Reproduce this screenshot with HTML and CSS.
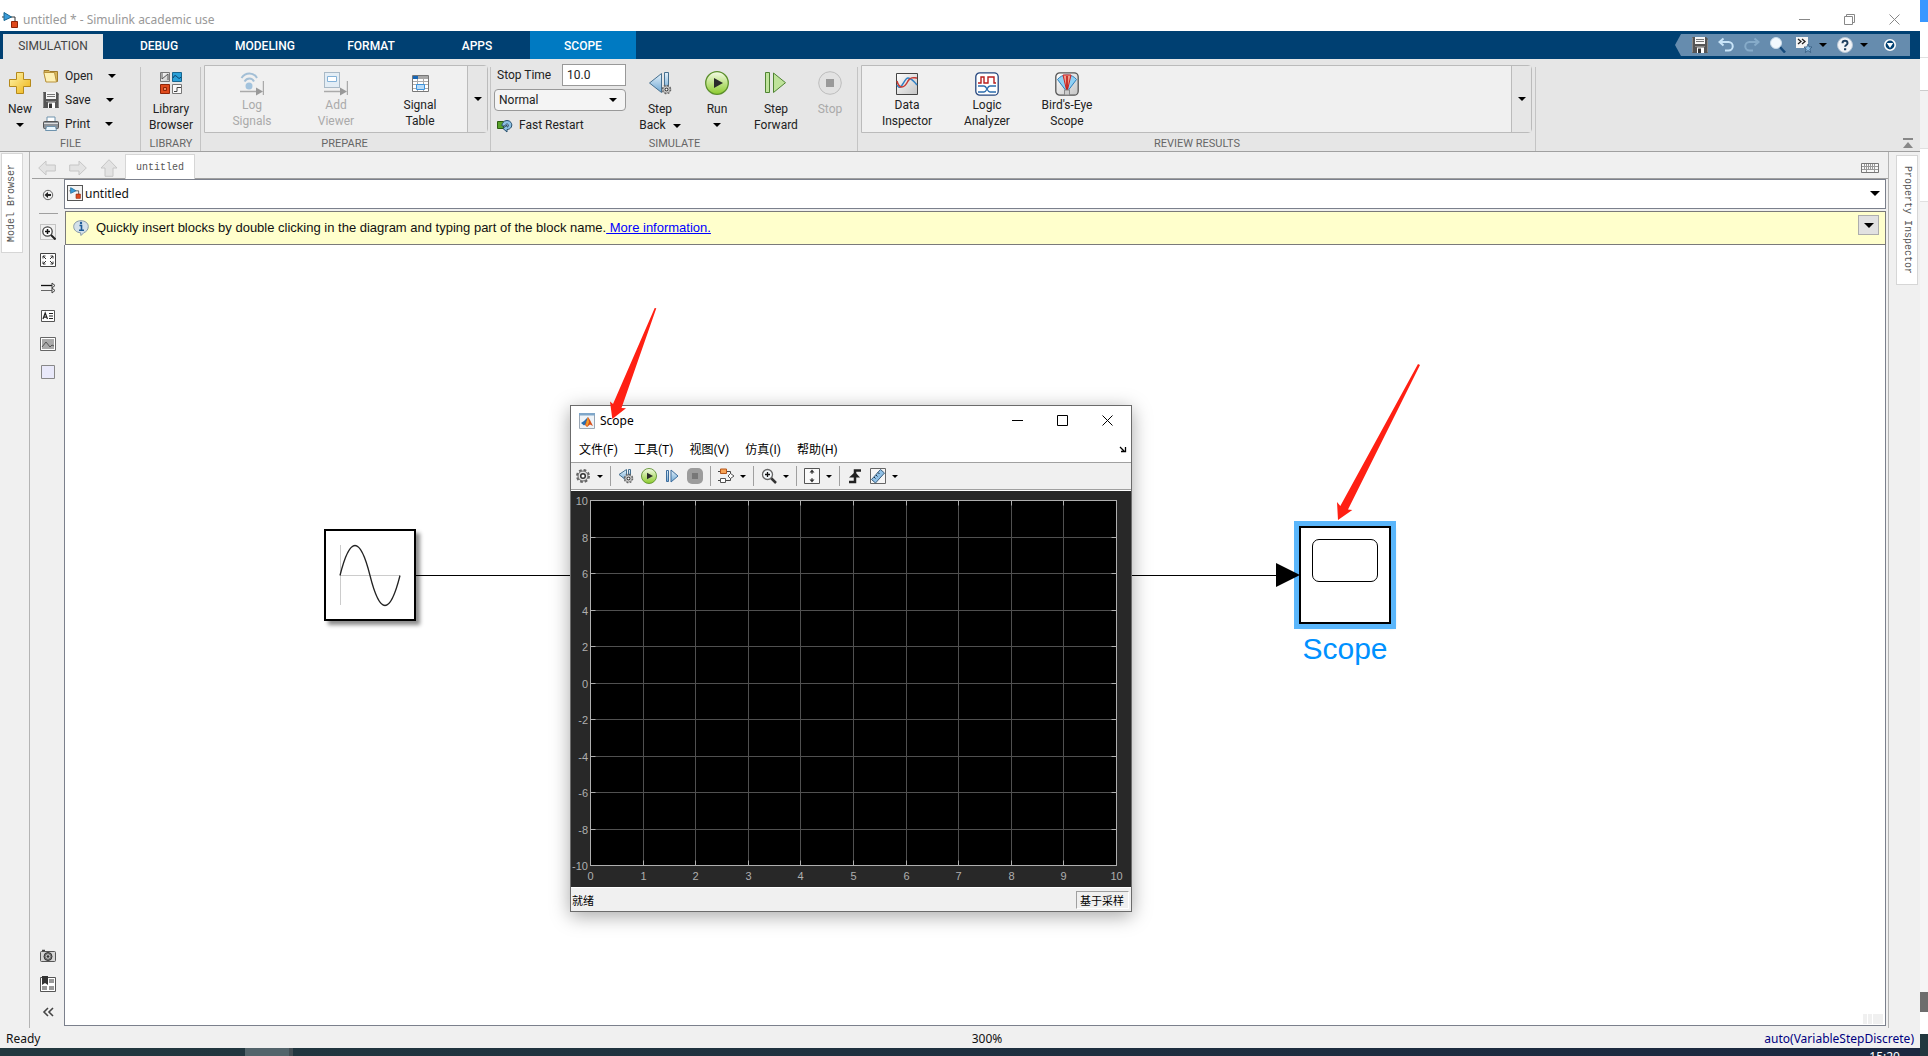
FILE: index.html
```html
<!DOCTYPE html>
<html lang="en">
<head>
<meta charset="UTF-8" />
<meta name="viewport" content="width=device-width, initial-scale=1" />
<title>untitled * - Simulink academic use</title>
<link rel="stylesheet" href="styles.css">
</head>
<body>

<!-- shared icons -->
<svg class="defs" aria-hidden="true">
  <defs>
    <linearGradient id="gGold" x1="0" y1="0" x2="1" y2="1"><stop offset="0" stop-color="#fff7b0"/><stop offset="1" stop-color="#eeb211"/></linearGradient>
    <linearGradient id="gGreen" x1="0" y1="0" x2="0" y2="1"><stop offset="0" stop-color="#f4fbe6"/><stop offset="1" stop-color="#8ccb2c"/></linearGradient>
    <linearGradient id="gBlue" x1="0" y1="0" x2="0" y2="1"><stop offset="0" stop-color="#e4f1fa"/><stop offset="1" stop-color="#6fa8d4"/></linearGradient>
    <linearGradient id="gGrey" x1="0" y1="0" x2="1" y2="1"><stop offset="0" stop-color="#fff"/><stop offset="1" stop-color="#c4c4c4"/></linearGradient>
    <symbol id="save" viewBox="0 0 16 16">
      <path d="M0 0h14l2 2v14H0z" fill="#555"/><path d="M3 0h10v7H3z" fill="#f6f6f6"/>
      <path d="M4 2.500h8M4 4.500h8" stroke="#777"/><path d="M3 9h10v1H3z" fill="#888"/><path d="M5 10.500h7V16H5z" fill="#fff"/><path d="M6 11.500h3V16H6z" fill="#333"/>
      <path d="M.5 .5v15M15.500 2.500v13" stroke="#888"/>
    </symbol>
    <symbol id="simulink" viewBox="0 0 16 16">
      <path d="M0 5h2M9 5h4v5" stroke="#333" fill="none"/><path d="M2 .5v8L9.500 5z" fill="#3b9bd8" stroke="#17658f"/>
      <path d="M9.500 9.500h6v6h-6z" fill="#e04a1c" stroke="#8f2508"/>
    </symbol>
    <symbol id="gear" viewBox="0 0 16 16">
      <circle cx="8" cy="8" r="6" fill="none" stroke="#666" stroke-width="2" stroke-dasharray="2.700 2"/>
      <circle cx="8" cy="8" r="5" fill="#e4e4e4" stroke="#666"/><circle cx="8" cy="8" r="2.300" fill="#fff" stroke="#333" stroke-width="1.500"/>
    </symbol>
    <symbol id="run" viewBox="0 0 24 24">
      <circle cx="12" cy="12" r="11.300" fill="url(#gGreen)" stroke="#5c8f2c" stroke-width="1.300"/><path d="M9 7v10l9-5z" fill="#2b2b2b"/>
    </symbol>
    <symbol id="stop" viewBox="0 0 24 24">
      <circle cx="12" cy="12" r="11.300" fill="#e2e2e2" stroke="#bdbdbd"/><path d="M8 8h8v8H8z" fill="#9a9a9a"/>
    </symbol>
    <symbol id="magnify" viewBox="0 0 16 16">
      <path d="M10 10l5 5" stroke="#333" stroke-width="2.500"/><circle cx="6.500" cy="6.500" r="5" fill="#f4f8fb" stroke="#666" stroke-width="1.300"/>
      <path d="M4 6.500h5M6.500 4v5" stroke="#111" stroke-width="1.300"/>
    </symbol>
    <symbol id="arrow" viewBox="0 0 18 16"><path d="M.7 8L8 1v4h9.300v6H8v4z" fill="#e3e3e3" stroke="#c6c6c6"/></symbol>
  </defs>
</svg>

<div class="desktop">
  <div class="app">
    <header class="titlebar">
      <svg class="i16"><use href="#simulink"/></svg>
      <span class="title">untitled * - Simulink academic use</span>
      <div class="winbuttons">
        <button aria-label="Minimize"><svg width="11" height="11"><path d="M0 5.500h11" stroke="#888"/></svg></button>
        <button aria-label="Restore"><svg width="11" height="11" fill="none" stroke="#888"><path d="M.5 2.500h8v8h-8zM2.500 2.500v-2h8v8h-2"/></svg></button>
        <button aria-label="Close"><svg width="11" height="11" stroke="#888"><path d="M.5 .5l10 10M10.500 .5l-10 10"/></svg></button>
      </div>
    </header>

    <nav class="tabs">
      <button class="tab active">SIMULATION</button>
      <button class="tab">DEBUG</button>
      <button class="tab">MODELING</button>
      <button class="tab">FORMAT</button>
      <button class="tab">APPS</button>
      <button class="tab context">SCOPE</button>
      <div class="quick">
        <button aria-label="Save"><svg class="i16"><use href="#save"/></svg></button>
        <button aria-label="Undo"><svg class="i16" viewBox="0 0 16 16" fill="none"><path d="M5.500 1.500L1.500 5l4 3.500M2 5h8.500a4 4 0 010 8.500H7" stroke="#c8e4f8" stroke-width="2"/></svg></button>
        <button aria-label="Redo"><svg class="i16" viewBox="0 0 16 16" fill="none"><path d="M10.500 1.500l4 3.500-4 3.500M14 5H5.500a4 4 0 000 8.500H9" stroke="#86abc9" stroke-width="2"/></svg></button>
        <button aria-label="Search"><svg class="i16" viewBox="0 0 16 16"><path d="M9.500 9.500l5.500 6" stroke="#174b7c" stroke-width="2.500"/><circle cx="6" cy="6" r="5.500" fill="#f3f9fd" stroke="#c9dbe9"/></svg></button>
        <button class="drop" aria-label="Favorites"><svg class="i16" viewBox="0 0 16 16"><path d="M0 0h12v11H0z" fill="#f4f4f4"/><path d="M2 2l3 2.500L2 7M6 2l3 2.500L6 7" stroke="#222" stroke-width="1.300" fill="none"/><path d="M12 7l1.200 3H16l-2.200 2 .9 3.500-2.700-2-2.700 2 .9-3.500L8 10h2.800z" fill="#8fc1e8" stroke="#33597c" stroke-width=".8"/></svg><i class="caret"></i></button>
        <button class="drop" aria-label="Help"><svg class="i16" viewBox="0 0 16 16"><circle cx="8" cy="8" r="7.500" fill="#f2f4f7" stroke="#b9c7d6"/><path d="M5.500 6.200c0-3.200 5-3.200 5 0 0 1.800-2.400 1.700-2.400 3.600" fill="none" stroke="#21405f" stroke-width="2"/><path d="M7 11.200h2.200v2H7z" fill="#21405f"/></svg><i class="caret"></i></button>
        <button class="more" aria-label="More"><svg width="12" height="12" viewBox="0 0 12 12"><circle cx="6" cy="6" r="5.200" fill="#004072" stroke="#fff" stroke-width="1.600"/><path d="M2.800 4h6.400L6 9z" fill="#fff"/></svg></button>
      </div>
    </nav>

    <section class="ribbon">
      <div class="group g-file">
        <div class="body">
          <button class="big new">
            <svg viewBox="0 0 24 24"><path d="M8.500 1.500h7v7h7v7h-7v7h-7v-7h-7v-7h7z" fill="url(#gGold)" stroke="#b5891b"/></svg>
            <span>New</span><i class="caret"></i>
          </button>
          <div class="rows">
            <button class="small"><svg class="i16" viewBox="0 0 16 16"><path d="M1 2.500h5l1 1h7.500v10H3z" fill="#d8b75c" stroke="#a07c2c"/><path d="M.8 4.500h10.700l2 9.500H3z" fill="#fdf0b4" stroke="#b8923c"/></svg>Open<i class="caret"></i></button>
            <button class="small"><svg class="i16"><use href="#save"/></svg>Save<i class="caret"></i></button>
            <button class="small"><svg class="i16" viewBox="0 0 16 16"><path d="M4 1h8v5H4z" fill="#fff" stroke="#6e93ad"/><rect x=".5" y="5.500" width="15" height="7" rx="1" fill="#8d9298" stroke="#555"/><path d="M1 7.500h14" stroke="#ddd"/><path d="M3.500 10.500h9l1 4h-11z" fill="#eaf6fd" stroke="#6e93ad"/></svg>Print<i class="caret"></i></button>
          </div>
        </div>
        <h2>FILE</h2>
      </div>

      <div class="group g-library">
        <div class="body">
          <button class="big">
            <svg viewBox="0 0 24 24"><path d="M1.500 1.500h9v9h-9z" fill="url(#gGrey)" stroke="#777"/><path d="M3 2v6l6-5v6" fill="none" stroke="#555"/><path d="M13.500 1.500h9v9h-9z" fill="#2aa0d8" stroke="#17658f"/><path d="M14 7c3-7 5 4 8-1" fill="none" stroke="#0b3f66"/><path d="M1.500 13.500h9v9h-9z" fill="#e04a1c" stroke="#8f2508"/><path d="M4.500 16.500h3v3h-3z" fill="#f08a60" stroke="#8f2508"/><path d="M13.500 13.500h9v9h-9z" fill="#fafafa" stroke="#777"/><path d="M15 20.500h3v-4h4" fill="none" stroke="#444"/></svg>
            <span>Library<br>Browser</span>
          </button>
        </div>
        <h2>LIBRARY</h2>
      </div>

      <div class="group g-prepare">
        <div class="body">
          <div class="gallery">
            <button class="big" disabled>
              <svg viewBox="0 0 24 24" fill="none"><path d="M1.500 6c4-6 12-6 15.500 0M4.500 9.500c2.500-4 7.500-4 9.500 0" stroke="#a3bfd6" stroke-width="2"/><circle cx="9" cy="14" r="3.500" fill="#a3c3dd"/><path d="M0 19.500h16M23.500 9v14" stroke="#aaa" stroke-width="1.500"/><path d="M16 15.500v8l7-4z" fill="#999"/></svg>
              <span>Log<br>Signals</span>
            </button>
            <button class="big" disabled>
              <svg viewBox="0 0 24 24" fill="none"><rect x=".5" y=".5" width="15" height="15" fill="#e3edf5" stroke="#a9b9c6"/><path d="M3.500 4.500h9v5h-9z" fill="#fff" stroke="#84b2d8"/><path d="M0 19.500h16M23.500 9v14" stroke="#aaa" stroke-width="1.500"/><path d="M16 15.500v8l7-4z" fill="#999"/></svg>
              <span>Add<br>Viewer</span>
            </button>
            <button class="big">
              <svg viewBox="0 0 24 24"><path d="M4.500 3.500h16v16h-16z" fill="#fff" stroke="#777"/><path d="M5 4h15v3H5z" fill="#a7a7a7"/><path d="M5 4h5v3H5z" fill="#1766b5"/><path d="M5 9.500h15M5 12.500h15M5 16.500h15M9.500 7v12M15.500 7v12" stroke="#aaa"/><path d="M8.500 12.500h8v5h-8z" fill="#b9dcf8" stroke="#3c92dc"/></svg>
              <span>Signal<br>Table</span>
            </button>
            <button class="expand" aria-label="Show more"><i class="caret"></i></button>
          </div>
        </div>
        <h2>PREPARE</h2>
      </div>

      <div class="group g-simulate">
        <div class="body">
          <div class="settings">
            <div class="stoptime"><label for="stoptime">Stop Time</label><input type="text" id="stoptime" value="10.0"></div>
            <select id="mode" aria-label="Simulation mode"><option>Normal</option></select>
            <button class="small"><svg class="i16" viewBox="0 0 16 16"><path d="M.5 4.500h6v7h-6z" fill="#58a22a" stroke="#2c5d10"/><path d="M6 5.500a5 5 0 018 0c2 3 0 7-4 7v2.500L6 11.500l4-3.500v2c2 0 2-3 0-3-1 0-2 1-2 2H5c0-1 0-2 1-3.500z" fill="#8dc0e4" stroke="#244c6b"/></svg>Fast Restart</button>
          </div>
          <button class="big stepback">
            <svg viewBox="0 0 24 24"><path d="M13.500 2.500v19L1.500 12z" fill="url(#gBlue)" stroke="#47708f"/><path d="M16.500 1.500h4v18h-4z" fill="url(#gBlue)" stroke="#47708f"/><use href="#gear" x="13" y="13" width="11" height="11"/></svg>
            <span>Step<br>Back <i class="caret"></i></span>
          </button>
          <button class="big run"><svg><use href="#run"/></svg><span>Run</span><i class="caret"></i></button>
          <button class="big forward">
            <svg viewBox="0 0 24 24"><path d="M1.500 1.500h4v20h-4zM9.500 2v19.500l12-9.800z" fill="#bfe39b" stroke="#4f8432"/></svg>
            <span>Step<br>Forward</span>
          </button>
          <button class="big stop" disabled><svg><use href="#stop"/></svg><span>Stop</span></button>
        </div>
        <h2>SIMULATE</h2>
      </div>

      <div class="group g-review">
        <div class="body">
          <div class="gallery">
            <button class="big">
              <svg viewBox="0 0 24 24" fill="none"><path d="M1.500 1.500h21v21h-21z" fill="url(#gGrey)" stroke="#444"/><path d="M2 13c4 8 7-7 11-7 3 0 5 2 9 7" stroke="#2e7fc4" stroke-width="1.500"/><path d="M2 9c2 8 7 8 11 0 3-5 6-3 9-3" stroke="#c63a34" stroke-width="1.500"/></svg>
              <span>Data<br>Inspector</span>
            </button>
            <button class="big">
              <svg viewBox="0 0 24 24" fill="none"><rect x=".8" y=".8" width="22.400" height="22.400" rx="4" fill="#fff" stroke="#24457d" stroke-width="1.300"/><path d="M3 11h3V5h3v6h4V5h6v6h2" stroke="#b81f1f" stroke-width="1.400"/><path d="M3 14h6c3 0 3 6 6 6h6M3 20h6c3 0 3-6 6-6h6" stroke="#2b6cad" stroke-width="1.400"/></svg>
              <span>Logic<br>Analyzer</span>
            </button>
            <button class="big">
              <svg viewBox="0 0 24 24"><rect x=".8" y=".8" width="22.400" height="22.400" rx="4" fill="url(#gGrey)" stroke="#555" stroke-width="1.300"/><path d="M12 20L2.500 7.500Q6 3 12 3t9.500 4.500z" fill="#8fd0f4" stroke="#2d80bd"/><path d="M12 20L8 3h8z" fill="#ef9d8d" stroke="#c22"/><path d="M12 4v15" stroke="#b11" stroke-width="1.500"/><path d="M9.500 18h5v5h-5z" fill="#ccc" stroke="#888"/></svg>
              <span>Bird's-Eye<br>Scope</span>
            </button>
            <button class="expand" aria-label="Show more"><i class="caret"></i></button>
          </div>
        </div>
        <h2>REVIEW RESULTS</h2>
      </div>
      <button class="collapse" aria-label="Minimize toolstrip"><svg width="10" height="11"><path d="M0 1h10" stroke="#888" stroke-width="2"/><path d="M5 4l5 6H0z" fill="#888"/></svg></button>
    </section>

    <main class="workspace">
      <aside class="dock left"><button class="docktab">Model Browser</button></aside>

      <section class="editor">
        <div class="doctabs">
          <button aria-label="Back"><svg width="18" height="16"><use href="#arrow"/></svg></button>
          <button aria-label="Forward"><svg width="18" height="16"><use href="#arrow" transform="rotate(180 9 8)"/></svg></button>
          <button aria-label="Up"><svg width="18" height="18"><path d="M9 .7L1 9h4v8.300h8V9h4z" fill="#e3e3e3" stroke="#c6c6c6"/></svg></button>
          <button class="doctab">untitled</button>
          <button class="keyboard" aria-label="Keyboard"><svg width="18" height="10"><path d="M.5 .5h17v9H.5z" fill="#f8f8f8" stroke="#777"/><path d="M1 3.500h16M1 6.500h16M3.500 1v6M5.500 1v5M7.500 1v5M9.500 1v5M11.500 1v5M13.500 1v6M5.500 7v2M13.500 7v2" stroke="#999"/></svg></button>
        </div>
        <div class="row">
          <div class="palette">
            <button aria-label="Hide browser"><svg class="i16" viewBox="0 0 16 16"><circle cx="8" cy="8" r="4.700" fill="#eee" stroke="#666"/><path d="M8 5L4.500 8 8 11V9h3V7H8z" fill="#222"/></svg></button>
            <hr>
            <button aria-label="Zoom"><svg class="i16" viewBox="0 0 16 16"><path d="M.5 .5h15v15H.5z" fill="none" stroke="#999" stroke-dasharray="1 1"/><circle cx="7.500" cy="7.500" r="4.700" fill="#fff" stroke="#444" stroke-width="1.300"/><path d="M11 11l4.500 4.500" stroke="#222" stroke-width="2"/><path d="M5 7.500h5M7.500 5v5" stroke="#111" stroke-width="1.500"/></svg></button>
            <button aria-label="Fit to view"><svg class="i16" viewBox="0 0 16 16" fill="none"><path d="M.5 1.500h15v13H.5z" fill="#fff" stroke="#444"/><path d="M3 6.500V4h2.500M3 4l3 3M13 6.500V4h-2.500M13 4l-3 3M3 9.500V12h2.500M3 12l3-3M13 9.500V12h-2.500M13 12l-3-3" stroke="#333"/></svg></button>
            <button aria-label="Sample time"><svg class="i16" viewBox="0 0 16 16" fill="none"><path d="M1 5.500h11" stroke="#111" stroke-width="1.300"/><path d="M1 10.500h11" stroke="#666"/><path d="M12 3v5l3-2.500zM12 8v5l3-2.500z" fill="#eee" stroke="#444"/></svg></button>
            <button aria-label="Annotation"><svg class="i16" viewBox="0 0 16 16" fill="none"><path d="M1.500 2.500h13v11h-13z" fill="#fff" stroke="#555"/><path d="M3 11l2.200-6L7.500 11M4 9.200h2.500M9 5.500h4M9 8h4M9 10.500h4" stroke="#222" stroke-width="1.200"/></svg></button>
            <button aria-label="Image"><svg class="i16" viewBox="0 0 16 16"><path d="M.5 1.500h15v13H.5z" fill="#fff" stroke="#666"/><path d="M2 3h12v10H2z" fill="#aaa"/><path d="M2 11l4-5 4 5 2-2 2 1" fill="none" stroke="#555"/></svg></button>
            <button aria-label="Area"><svg class="i16" viewBox="0 0 16 16"><path d="M1.500 1.500h13v13h-13z" fill="#e9e9fa" stroke="#888"/></svg></button>
            <button class="push" aria-label="Screenshot"><svg class="i16" viewBox="0 0 16 16"><path d="M2 2.500h3" stroke="#444" stroke-width="1.500"/><rect x=".5" y="3.500" width="15" height="10" rx="1" fill="#d5d5d5" stroke="#555"/><circle cx="8" cy="8.500" r="4" fill="#777" stroke="#333"/><circle cx="8" cy="8.500" r="1.800" fill="#333" stroke="#ccc"/></svg></button>
            <button aria-label="Bookmarks"><svg class="i16" viewBox="0 0 16 16"><path d="M.5 1.500h15v14H.5z" fill="#fff" stroke="#555"/><path d="M9 3h5v4H9zM9 10h5v4H9zM2 10h5v4H2z" fill="#999"/><path d="M2 0h6v9L5 7 2 9z" fill="#333"/></svg></button>
            <button aria-label="Collapse"><svg class="i16" viewBox="0 0 16 16" fill="none"><path d="M8 4L4 8l4 4M13 4L9 8l4 4" stroke="#444" stroke-width="1.600"/></svg></button>
          </div>

          <div class="view">
            <div class="address">
              <svg width="16" height="16" viewBox="-3 -3 22 22"><path d="M-2.300-2.300h20.600v20.600h-20.600z" fill="#f4f4f4" stroke="#555" stroke-width="1.400"/><use href="#simulink" width="16" height="16"/></svg>
              <span>untitled</span>
              <button aria-label="History"><i class="caret large"></i></button>
            </div>
            <div class="tip">
              <svg class="i16" viewBox="0 0 16 16"><path d="M8 .7c4 0 7.300 2.400 7.300 5.800S13 12 11 12.500L8 15.500 7.500 12.700C3.500 12.500.7 10 .7 6.500S4 .7 8 .7z" fill="#d3e0ea" stroke="#8798a6"/><path d="M6.500 5.500H8.500v4.500M6 10.200h5" stroke="#1c5a96" stroke-width="1.600" fill="none"/><circle cx="8" cy="3" r="1.200" fill="#1c5a96"/></svg>
              <p>Quickly insert blocks by double clicking in the diagram and typing part of the block name.<a href="#">&nbsp;More information.</a></p>
              <button aria-label="Options"><i class="caret large"></i></button>
            </div>

            <div class="canvas">
              <div class="block sine">
                <svg width="88" height="88" fill="none"><path d="M14.500 14v60M14 44.500h60" stroke="#ccc"/><path d="M14 44.500C24 4.500 34 4.500 44 44.500S64 84.500 74 44.500" stroke="#222" stroke-width="1.300"/></svg>
              </div>
              <div class="block scope"><div class="screen"></div></div>
              <div class="blockname">Scope</div>
              <svg class="layer">
                <path d="M351 330.500h860" stroke="#000"/>
                <path d="M1211 318v24l24-12z"/>
              </svg>

              <div class="scopewin">
                <div class="scopetitle">
                  <svg class="i16" viewBox="0 0 16 16"><path d="M.5 .5h15v15H.5z" fill="#eef3f8" stroke="#9aa7b5"/><path d="M0 0h16v2.500H0z" fill="#7fa6c9"/><path d="M2 10l3-2 4-4-2 7-2 1.500z" fill="#2a6fb0"/><path d="M9 4l2 3 3 6-3-1.500L8 14l-2-2z" fill="#d8501c"/><path d="M9 4l1 5-2 5-1-3z" fill="#f3a02c"/></svg>
                  <span>Scope</span>
                  <div class="winbuttons">
                    <button aria-label="Minimize"><svg width="11" height="11"><path d="M0 5.500h11" stroke="#000"/></svg></button>
                    <button aria-label="Maximize"><svg width="11" height="11"><path d="M.5 .5h10v10H.5z" fill="none" stroke="#000"/></svg></button>
                    <button aria-label="Close"><svg width="11" height="11" stroke="#000"><path d="M.5 .5l10 10M10.500 .5l-10 10"/></svg></button>
                  </div>
                </div>
                <div class="scopemenu" lang="zh">
                  <button>文件(F)</button><button>工具(T)</button><button>视图(V)</button><button>仿真(I)</button><button>帮助(H)</button>
                  <svg width="8" height="8"><path d="M1 2l4 4M6.500 2v4.500H2" fill="none" stroke="#000" stroke-width="1.300"/></svg>
                </div>
                <div class="scopetools">
                  <button aria-label="Settings"><svg class="i16"><use href="#gear"/></svg><i class="caret"></i></button>
                  <hr>
                  <button aria-label="Step back"><svg class="i16" viewBox="0 0 16 16"><path d="M8.500 1.500v11L1 6.500zM10.500 1.500h2v8h-2z" fill="url(#gBlue)" stroke="#47708f"/><use href="#gear" x="5" y="5" width="11" height="11"/></svg></button>
                  <button aria-label="Run"><svg class="i16"><use href="#run"/></svg></button>
                  <button aria-label="Step forward"><svg class="i16" viewBox="0 0 16 16"><path d="M2.500 2.500h2v11h-2zM7 2v12l7-6z" fill="url(#gBlue)" stroke="#3c6c9c"/></svg></button>
                  <button aria-label="Stop"><svg class="i16" viewBox="0 0 16 16"><rect width="16" height="16" rx="5" fill="#9c9c9c"/><path d="M5 5h6v6H5z" fill="#777"/></svg></button>
                  <hr>
                  <button aria-label="Highlight block"><svg class="i16" viewBox="0 0 16 16" fill="none"><path d="M8 3.500h4.500V6M0 12.500h12.500V10M0 3.500h2" stroke="#444"/><path d="M2.500 1h6v4.500h-6z" fill="#f7a354" stroke="#b5561b"/><path d="M2.500 10.500h5v4h-5zM12.500 5.500L16 8l-3.500 2.500L10 8z" fill="#fff" stroke="#555"/></svg><i class="caret"></i></button>
                  <hr>
                  <button aria-label="Zoom"><svg class="i16"><use href="#magnify"/></svg><i class="caret"></i></button>
                  <hr>
                  <button aria-label="Scale axes"><svg class="i16" viewBox="0 0 16 16"><path d="M.5 .5h15v15H.5z" fill="#fafafa" stroke="#555"/><path d="M5.500 4.500L8 1.500l2.500 3zM5.500 11.500l2.500 3 2.500-3z" fill="#333"/><path d="M8 4v2M8 10v2" stroke="#333"/></svg><i class="caret"></i></button>
                  <hr>
                  <button aria-label="Trigger"><svg class="i16" viewBox="0 0 16 16" fill="none"><path d="M2 14h6V2.500h6" stroke="#222" stroke-width="2.500"/><path d="M2 9.500L8 4l5 5.500z" fill="#222"/></svg></button>
                  <button aria-label="Measurements"><svg class="i16" viewBox="0 0 16 16"><path d="M.5 .5h15v15H.5z" fill="#f6f6f6" stroke="#666"/><path d="M1.500 11.500l9-10 4 3.500-9 10z" fill="#8fc0e6" stroke="#3c5f7d"/><path d="M4 9l1.500 1.500M6 7l1.500 1.500M8 4.500L9.500 6" stroke="#234"/></svg><i class="caret"></i></button>
                </div>
                <svg class="plot" id="plot" viewBox="0 0 560 396" role="img" aria-label="Scope axes"></svg>
                <div class="scopestatus" lang="zh"><span>就绪</span><span class="sampled">基于采样</span></div>
              </div>

              <!-- pointers over the block and the window title -->
              <svg class="layer pointers">
                <path d="M589.700 63L591.300 63.300 556.500 163 561 163.300 547.300 174 545 156.500 548 159z"/>
                <path d="M1353 119L1355 120 1283 264.500 1287.300 265 1273 275 1272 257 1275.300 261z"/>
              </svg>
              <div class="grip"><i></i><i></i><i></i></div>
            </div>
          </div>
        </div>
      </section>

      <aside class="dock right"><button class="docktab">Property Inspector</button></aside>
    </main>

    <footer class="status">
      <span>Ready</span>
      <span class="zoom">300%</span>
      <a href="#">auto(VariableStepDiscrete)</a>
    </footer>
  </div>
  <div class="taskbar"><i></i><span>15:20</span></div>
</div>
<div class="edge"><i class="badge"></i><i class="r1"></i><i class="r2"></i><i class="r3"></i><i class="r4"></i><i class="r5"></i><i class="thumb"></i><i class="r6"></i><i class="r7"></i></div>

<script>
  // axes: x 0..10, y -10..10
  const plot = document.getElementById('plot');
  const left = 19.5, top_ = 9.5, w = 526, h = 365;
  let lines = '', ticks = '', labels = '';

  for (let i = 0; i <= 10; i++) {
    const x = Math.round(left + i * w / 10 - 0.5) + 0.5;
    const y = Math.round(top_ + i * h / 10 - 0.5) + 0.5;
    lines += `M${x} ${top_}v${h}M${left} ${y}h${w}`;
    ticks += `M${x} ${top_}v5M${x} ${top_ + h}v-5M${left} ${y}h5M${left + w} ${y}h-5`;
    labels += `<text x="${x}" y="389" text-anchor="middle">${i}</text>`;
    labels += `<text x="17" y="${y + 4}" text-anchor="end">${10 - i * 2}</text>`;
  }
  plot.innerHTML = `<rect x="${left}" y="${top_}" width="${w}" height="${h}" fill="#000"/>
    <path d="${lines}" stroke="#505050"/>
    <path d="${ticks}" stroke="#afafaf"/>
    <rect x="${left}" y="${top_}" width="${w}" height="${h}" fill="none" stroke="#afafaf"/>${labels}`;
</script>
</body>
</html>
```

FILE: styles.css
```css
* { box-sizing: border-box; }
body {
  margin: 0; height: 100vh; overflow: hidden; display: flex;
  font-family: "Noto Sans", "Noto Sans CJK SC", sans-serif; font-size: 12px; color: #111;
  background: #f0f0f0;
}
button {
  border: 0; padding: 0; margin: 0; background: none; color: inherit;
  font: inherit; cursor: pointer;
}
svg { display: block; flex: none; }
.defs { position: absolute; width: 0; height: 0; }
.i16 { width: 16px; height: 16px; }
.caret {
  display: inline-block; flex: none; width: 0; height: 0;
  border: 4px solid transparent; border-top-color: #000; border-bottom: 0;
}
.caret.large { border-width: 5px; border-bottom: 0; }
.desktop { flex: 1; min-width: 0; display: flex; flex-direction: column; }
.app { flex: 1; min-height: 0; display: flex; flex-direction: column; }

/* title bar */
.titlebar {
  height: 31px; padding: 8px 20px 0 2px; background: #fff; color: #999;
  display: flex; align-items: center; gap: 5px;
}
.winbuttons { margin-left: auto; display: flex; gap: 34px; }

/* tab strip */
.tabs {
  height: 28px; padding: 0 10px 0 0; background: #004072; color: #fff;
  display: flex; font-family: Roboto, sans-serif; font-size: 12px; font-weight: 500;
}
.tab { width: 106px; padding-top: 2px; }
.tab.active { width: 100px; margin: 3px 3px 0; padding: 0 0 2px; background: #e6e6e6; color: #444; font-weight: 400; }
.tab.context { background: #007ac2; }
.quick {
  margin: 3px 0 3px auto; padding: 0 14px 0 17px; background: #668cae;
  display: flex; align-items: center; gap: 10px;
  clip-path: polygon(6px 0, 100% 0, 100% 100%, 6px 100%, 0 50%);
}
.quick .drop { display: flex; align-items: center; gap: 7px; }
.quick .more { margin-left: 6px; }

/* ribbon */
.ribbon {
  display: flex; background: #e6e6e6; border-bottom: 1px solid #a0a0a0;
  font-family: Roboto, sans-serif; color: #222;
}
.group {
  background: linear-gradient(#c4c4c4, #c4c4c4) right 8px / 1px 100% no-repeat;
}
.group .body { height: 78px; display: flex; }
.group h2 {
  margin: 0; font-size: 11px; font-weight: 400; line-height: 14px;
  text-align: center; color: #666;
}
.g-file { width: 141px; }
.g-library { width: 60px; }
.g-prepare { width: 290px; padding-right: 3px; }
.g-simulate { width: 367px; }
.g-review { width: 678px; }
.big {
  padding-top: 12px; display: flex; flex-direction: column; align-items: center;
  line-height: 16px; white-space: nowrap;
}
.big > svg { width: 24px; height: 24px; margin-bottom: 6px; }
.big > .caret { margin-top: 6px; }
.big span .caret { vertical-align: middle; margin-left: 4px; }
.big:disabled { color: #aaa; }
.new { width: 40px; margin-right: 3px; }
.g-library .big { width: 100%; }
.rows { padding-top: 5px; display: flex; flex-direction: column; align-items: flex-start; }
.small { flex: none; height: 24px; display: flex; align-items: center; gap: 6px; }
.rows .small .caret { margin-left: 9px; }

.gallery {
  flex: 1; height: 68px; margin: 6px 4px 0 3px; padding-left: 5px; display: flex;
  background: #f0f0f0; border: 1px solid #bbb; border-radius: 0 4px 4px 0;
}
.gallery .big { width: 84px; padding-top: 6px; }
.g-review .gallery .big { width: 80px; }
.gallery .big > svg { margin-bottom: 1px; }
.g-prepare .gallery { margin-right: 0; }
.expand { width: 20px; margin-left: auto; border-left: 1px solid #bbb; background: #e6e6e6; }
.expand .caret { display: block; margin: 0 auto; }

.settings { width: 138px; padding: 5px 3px 0; display: flex; flex-direction: column; }
.stoptime { display: flex; align-items: center; justify-content: space-between; padding-left: 3px; margin-bottom: 3px; }
.stoptime input {
  width: 64px; height: 22px; padding: 0 4px; border: 1px solid #999;
  font: inherit; color: #222; background: #fff;
}
.settings select {
  flex: none; height: 22px; padding: 0 4px; border: 1px solid #999; border-radius: 4px;
  font: 12px Roboto, sans-serif; color: #222; appearance: none;
  background: #f4f4f4 url("data:image/svg+xml,%3Csvg xmlns='http://www.w3.org/2000/svg' width='8' height='4'%3E%3Cpath d='M0 0h8L4 4z'/%3E%3C/svg%3E") right 8px center no-repeat;
}
.settings .small { padding-left: 3px; margin-top: 2px; }
.stepback { width: 62px; }
.run { width: 52px; }
.forward { width: 66px; }
.stop { width: 42px; }
.collapse { margin: auto 7px 2px auto; }

/* workspace */
.workspace { flex: 1; min-height: 0; display: flex; }
.dock { padding: 1px; }
.dock.left { width: 30px; border-right: 1px solid #b4b4b4; }
.dock.right { width: 32px; padding: 3px 2px 0 7px; border-left: 1px solid #b4b4b4; }
.docktab {
  display: block; width: 22px; padding: 10px 0; background: #fff; border: 1px solid #d6d6d6;
  font: 10px/20px "Liberation Mono", monospace; color: #555;
  writing-mode: vertical-rl; white-space: nowrap;
}
.left .docktab { transform: rotate(180deg); }
.editor { flex: 1; min-width: 0; display: flex; flex-direction: column; padding-left: 2px; }
.doctabs {
  height: 27px; padding: 6px 9px 0 6px; border-bottom: 1px solid #a0a0a0;
  display: flex; align-items: center; gap: 13px;
}
.doctab {
  width: 70px; height: 25px; margin: 0 0 -1px -6px; align-self: flex-end; background: #fff;
  border: 1px solid #d6d6d6; border-bottom: 0;
  font: 10px "Liberation Mono", monospace; color: #555;
}
.keyboard { margin-left: auto; }
.row { flex: 1; min-height: 0; display: flex; }
.palette {
  width: 32px; padding: 8px 0 8px; display: flex; flex-direction: column;
  align-items: center; gap: 12px;
}
.palette hr { width: 19px; margin: -2px 0 -2px; border: 0; border-top: 1px solid #a0a0a0; }
.palette .push { margin-top: auto; }
.view { flex: 1; min-width: 0; display: flex; flex-direction: column; padding-right: 2px; }
.address {
  height: 30px; padding: 0 5px 2px 2px; background: #fff; border: 1px solid #7b808c;
  display: flex; align-items: center; gap: 2px;
}
.address button { margin-left: auto; }
.address .caret { display: block; }
.tip {
  height: 34px; margin: 2px 0 0 1px; padding: 3px 6px 3px 7px; background: #ffc;
  border: 1px solid #7a7a7a; display: flex; align-items: center; gap: 7px;
  font-family: "Liberation Sans", Arial, sans-serif; font-size: 13px;
}
.tip p { margin: 0 0 2px; }
.tip a { color: #00f; }
.tip button {
  width: 21px; height: 20px; margin: 0 6px auto auto;
  background: #e1e1e1; border: 1px solid #adadad;
}
.tip .caret { display: block; margin: 0 auto; }
.tip button { margin-right: 0; }

/* canvas with free-placed blocks */
.canvas {
  flex: 1; min-height: 0; position: relative; overflow: hidden; background: #fff;
  border: 1px solid #7b808c; border-top: 0; margin-bottom: 2px;
}
.layer { position: absolute; left: 0; top: 0; width: 100%; height: 100%; pointer-events: none; }
.pointers { fill: #ff2013; }
.block { position: absolute; background: #fff; border: 2px solid #000; }
.sine { left: 259px; top: 284px; width: 92px; height: 92px; box-shadow: 4px 4px 4px rgba(0,0,0,0.45); }
.scope {
  left: 1234px; top: 281px; width: 92px; height: 98px; padding: 11px;
  outline: 5px solid #5ab6fb; box-shadow: 3px 3px 3px #2a6ea5;
}
.screen { height: 43px; border: 1px solid #000; border-radius: 7px; }
.blockname {
  position: absolute; left: 1230px; top: 386px; width: 100px; text-align: center;
  font: 30px/36px "Liberation Sans", Arial, sans-serif; color: #0091ff;
}
.grip { position: absolute; right: 2px; bottom: 1px; display: flex; gap: 1px; }
.grip i { width: 4px; height: 10px; background: #f0f0f0; }
.grip i:last-child { width: 10px; }

/* scope window */
.scopewin {
  position: absolute; left: 505px; top: 160px; width: 562px;
  background: #fff; border: 1px solid #6b6b6b; box-shadow: 0 4px 18px rgba(0,0,0,0.35);
  color: #000;
}
.scopetitle { height: 29px; padding: 0 18px 0 8px; display: flex; align-items: center; gap: 5px; }
.scopemenu { height: 27px; padding: 0 4px 0 8px; display: flex; align-items: center; gap: 16px; font-family: Roboto, "Noto Sans CJK SC", sans-serif; }
.scopemenu svg { margin-left: auto; }
.scopetools {
  height: 28px; padding: 0 4px; background: #f0f0f0;
  border-top: 1px solid #a0a0a0; border-bottom: 1px solid #a0a0a0;
  display: flex; align-items: center; gap: 7px;
}
.scopetools button { display: flex; align-items: center; gap: 6px; }
.scopetools .caret { border-width: 3px; border-bottom: 0; }
.scopetools hr { width: 1px; height: 20px; margin: 0; border: 0; background: #a0a0a0; }
.plot {
  width: 100%; height: auto; border-top: 1px solid #fff; background: #282828;
  font-family: "Liberation Sans", Arial, sans-serif; font-size: 11px;
}
.plot text { fill: #afafaf; }
.scopestatus {
  height: 24px; padding: 0 2px 0 1px; border-top: 1px solid #fff; background: #f0f0f0;
  display: flex; align-items: center; justify-content: space-between;
  font: 11px "Noto Sans CJK SC", sans-serif;
}
.sampled {
  height: 18px; line-height: 16px; padding: 0 4px 0 3px;
  border: 1px solid #fff; border-top-color: #a0a0a0; border-left-color: #a0a0a0;
}

/* status bar and what lies behind the app */
.status {
  height: 20px; padding: 0 6px; display: grid; align-items: center;
  grid-template-columns: minmax(0, 1fr) auto minmax(0, 1fr);
}
.status .zoom { padding-left: 54px; }
.status a { text-align: right; color: #00007f; text-decoration: none; }
.taskbar {
  height: 8px; padding: 0 20px 0 245px; overflow: hidden; color: #fff;
  background: linear-gradient(90deg, #22383f, #1b2840);
  display: flex; justify-content: space-between;
}
.taskbar i { width: 48px; background: #53646b; border-right: 4px solid #434e54; }
.taskbar span { line-height: 16px; padding-top: 1px; }
.edge { width: 8px; background: #f5f5f5; display: flex; flex-direction: column; }
.badge { height: 22px; background: #3897ff; }
.r1 { height: 35px; background: #fff; }
.r2 { height: 33px; background: #fff; border-top: 1px solid #e0e0e0; }
.r3 { height: 58px; background: #f2f2f2; border-top: 1px solid #ccc; }
.r4 { height: 53px; background: #fff; border-top: 1px solid #e0e0e0; }
.r5 { flex: 1; border-top: 1px solid #e0e0e0; }
.thumb { height: 20px; background: #6d6d6d; }
.r6 { height: 22px; background: #fff; }
.r7 { height: 22px; background: #22383f; }
```
